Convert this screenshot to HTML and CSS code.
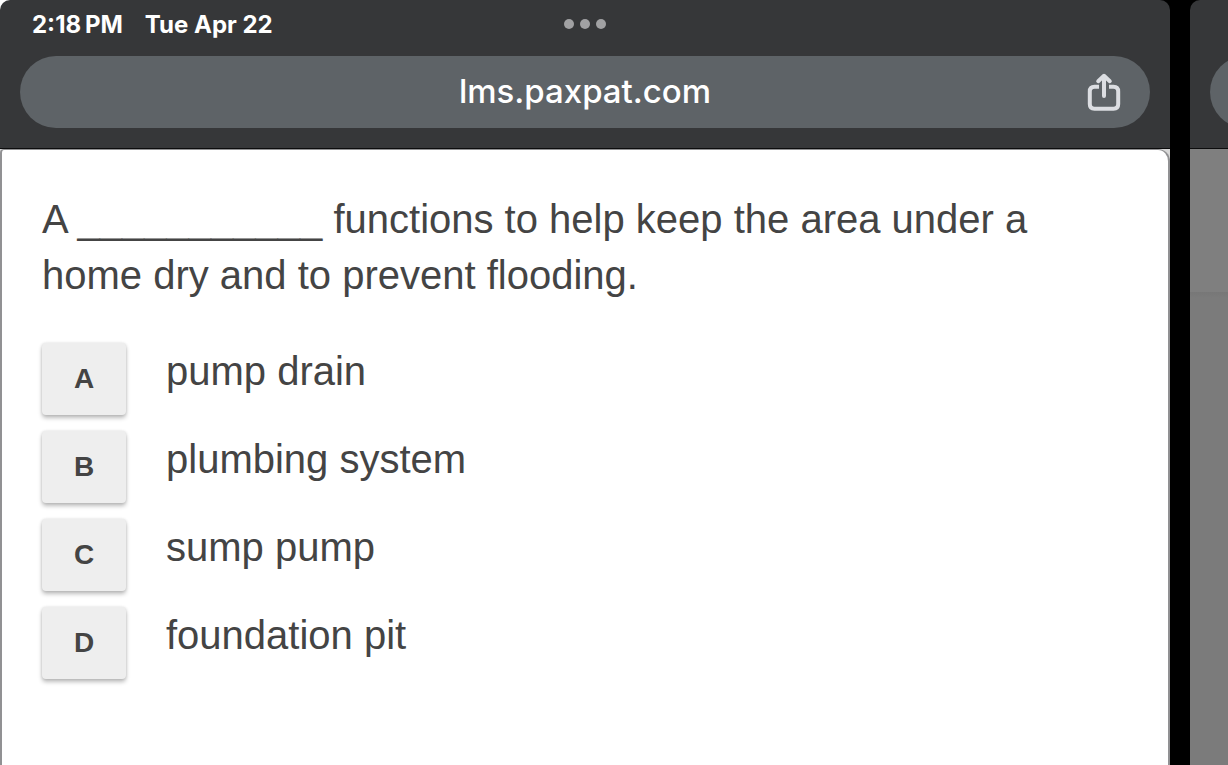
FILE: index.html
```html
<!DOCTYPE html>
<html lang="en">
<head>
<meta charset="utf-8">
<meta name="viewport" content="width=device-width, initial-scale=1">
<title>lms.paxpat.com</title>
<link rel="stylesheet" href="styles.css">
</head>
<body>
<div class="screen">
  <div class="window">
    <header class="chrome">
      <div class="status">
        <div class="clock"><time>2:18&#8201;PM</time><span>Tue Apr 22</span></div>
        <button class="multitask" type="button" aria-label="Multitasking"><i></i><i></i><i></i></button>
      </div>
      <div class="address">
        <span class="url">lms.paxpat.com</span>
        <button class="share" type="button" aria-label="Share">
          <svg width="36" height="40" viewBox="0 0 36 40" fill="none" stroke="#dcdee2" stroke-width="4" stroke-linecap="round" stroke-linejoin="round">
            <path d="M13 14.800H8.500Q3.800 14.800 3.800 19.500V32Q3.800 36.700 8.500 36.700H27.500Q32.200 36.700 32.200 32V19.500Q32.200 14.800 27.500 14.800H23" stroke-linecap="butt"/>
            <path d="M18 24V4.500M12.200 9.200L18 3.800L23.800 9.200"/>
          </svg>
        </button>
      </div>
    </header>
    <div class="viewport">
      <main class="page">
        <p class="question">A ___________ functions to help keep the area under a home dry and to prevent flooding.</p>
        <ul class="options">
          <li class="option"><button class="letter" id="a" type="button" aria-labelledby="a a-text">A</button><span id="a-text">pump drain</span></li>
          <li class="option"><button class="letter" id="b" type="button" aria-labelledby="b b-text">B</button><span id="b-text">plumbing system</span></li>
          <li class="option"><button class="letter" id="c" type="button" aria-labelledby="c c-text">C</button><span id="c-text">sump pump</span></li>
          <li class="option"><button class="letter" id="d" type="button" aria-labelledby="d d-text">D</button><span id="d-text">foundation pit</span></li>
        </ul>
      </main>
    </div>
  </div>
  <aside class="neighbor">
    <div class="chrome chrome-side"><div class="address"></div></div>
    <div class="side-head"></div>
    <div class="side-body"></div>
  </aside>
</div>
</body>
</html>
```
FILE: styles.css
```css
* { box-sizing: border-box; }

body {
  margin: 0;
  background: #000;
  color: #444;
  font-family: "Liberation Sans", Arial, sans-serif;
}

button {
  border: 0;
  padding: 0;
  background: none;
  color: inherit;
  font: inherit;
}

.screen {
  display: flex;
  gap: 20px;
  min-height: 100vh;
  overflow: hidden;
  background: linear-gradient(90deg, #fff 20px, #000 20px);
}

.window {
  flex: 1;
  display: flex;
  flex-direction: column;
  min-width: 0;
}

.chrome {
  padding: 0 20px 20px;
  border-bottom: 1px solid #0c0c0d;
  border-radius: 10px 10px 0 0;
  background: #363739;
  color: #fff;
  font-family: Inter, sans-serif;
}

.status {
  display: grid;
  grid-template-columns: 1fr auto 1fr;
  align-items: center;
  height: 48px;
  margin-bottom: 8px;
}

.clock {
  display: flex;
  gap: 22px;
  padding-left: 12px;
  font-size: 24px;
  font-weight: 700;
  white-space: nowrap;
}

.multitask { display: flex; gap: 6px; }

.multitask i {
  width: 10px;
  height: 10px;
  border-radius: 50%;
  background: #a1a1a3;
}

.address {
  display: grid;
  grid-template-columns: 1fr auto 1fr;
  align-items: center;
  height: 72px;
  padding: 0 28px;
  border-radius: 36px;
  background: #5e6367;
}

.url {
  grid-column: 2;
  padding-bottom: 2px;
  font-size: 33px;
  font-weight: 500;
  line-height: 40px;
}

.share { justify-self: end; height: 40px; }

.share svg { display: block; }

.viewport {
  flex: 1;
  display: flex;
  background: #d8d8d8;
}

.page {
  flex: 1;
  padding: 41px 40px 80px;
  border: 2px solid #919193;
  border-width: 1px 2px 0;
  border-radius: 4px 12px 0 0;
  background: #fff;
  font-size: 40px;
  line-height: 56px;
}

.question { margin: 0 0 40px; }

.options {
  display: grid;
  gap: 16px;
  margin: 0;
  padding: 0;
  list-style: none;
}

.option { display: flex; gap: 40px; }

.letter {
  width: 84px;
  height: 72px;
  border-radius: 4px;
  background: #eee;
  box-shadow: 0 3px 4px rgba(0, 0, 0, .26), 0 0 3px rgba(0, 0, 0, .12);
  font-size: 28px;
  font-weight: 700;
}

.neighbor {
  display: flex;
  flex-direction: column;
  width: 38px;
  overflow: hidden;
}

.chrome-side {
  width: 200px;
  padding-top: 56px;
}

.side-head { height: 143px; background: #7f7f7f; }

.side-body {
  flex: 1;
  background: linear-gradient(#777, #7b7b7b 6px);
}
```
